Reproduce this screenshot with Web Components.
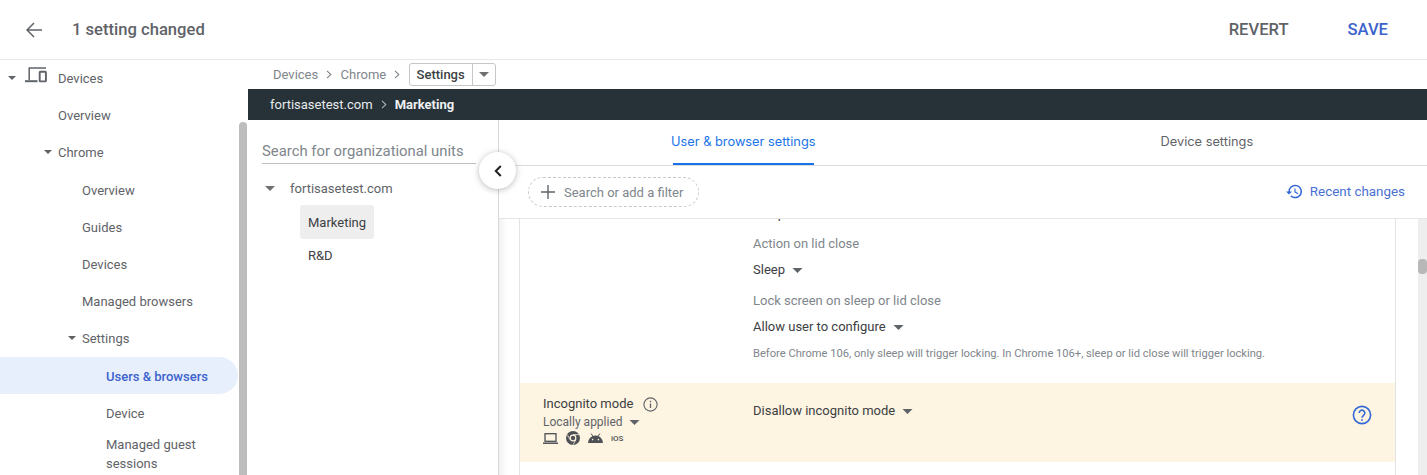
<!DOCTYPE html>
<html>
<head>
<meta charset="utf-8">
<title>Settings</title>
<style>
  html, body { margin: 0; height: 475px; overflow: hidden; background: #fff; }
  body { font-family: Roboto, "Liberation Sans", sans-serif; color: #3c4043; }
  admin-page { height: 475px; }
</style>
</head>
<body>
<admin-page></admin-page>
<script>
const ICONS = {
  caret: `<svg width="10" height="5" viewBox="0 0 10 5"><path d="M0 0h10L5 5z" fill="currentColor"/></svg>`,
  devices: `<svg width="22" height="16" viewBox="0 0 22 16" fill="none" stroke="currentColor" stroke-width="1.5"><path d="M21 1H4.2v12"/><path d="M0 14.2h12.5" stroke-width="2"/><rect x="14.7" y="4.8" width="6.2" height="9.6" rx=".6" stroke-width="1.9"/></svg>`,
  back: `<svg width="16" height="16" viewBox="0 0 16 16" fill="none" stroke="currentColor" stroke-width="1.5"><path d="M16 8H1.5M8 1 1 8l7 7"/></svg>`,
  crumb: `<svg width="6" height="9" viewBox="0 0 6 9" fill="none" stroke="currentColor" stroke-width="1.1"><path d="M1 .8 4.8 4.5 1 8.2"/></svg>`,
  plus: `<svg width="14" height="14" viewBox="0 0 14 14" fill="none" stroke="currentColor" stroke-width="1.4"><path d="M7 0v14M0 7h14"/></svg>`,
  history: `<svg width="16" height="15" viewBox="1 2.5 21 19" fill="currentColor"><path d="M13 3a9 9 0 0 0-9 9H1l3.9 3.9L9 12H6a7 7 0 1 1 2.05 4.95l-1.42 1.42A9 9 0 1 0 13 3zm-1 5v5l4.25 2.52.77-1.28-3.52-2.09V8z"/></svg>`,
  chevron: `<svg width="8" height="12" viewBox="0 0 8 12" fill="none" stroke="currentColor" stroke-width="2"><path d="M6.8 1 1.8 6l5 5"/></svg>`,
  info: `<svg width="15" height="15" viewBox="0 0 15 15" fill="none" stroke="currentColor"><circle cx="7.5" cy="7.5" r="6.6" stroke-width="1.1"/><path d="M7.5 6.5v4.4M7.5 3.7v1.5" stroke-width="1.3"/></svg>`,
  help: `<svg width="20" height="20" viewBox="0 0 20 20" fill="none" stroke="currentColor"><circle cx="10" cy="10" r="8.6" stroke-width="1.6"/><path d="M7.2 8a2.8 2.8 0 1 1 4.5 2.2c-1 .8-1.7 1.3-1.7 2.6" stroke-width="1.6"/><path d="M10 14.2v1.6" stroke-width="1.7"/></svg>`,
  laptop: `<svg width="15" height="11" viewBox="0 0 15 11" fill="none" stroke="currentColor"><rect x="2" y=".7" width="11" height="7.6" stroke-width="1.3"/><path d="M0 10.2h15" stroke-width="1.5"/></svg>`,
  chrome: `<svg width="14" height="14" viewBox="0 0 14 14"><circle cx="7" cy="7" r="7" fill="currentColor"/><circle cx="7" cy="7" r="3.4" fill="#fdf4e1"/><circle cx="7" cy="7" r="2.2" fill="currentColor"/><path d="M7 3.6h6M4.1 8.7 1.2 3.6M9.9 8.7 7 13.8" stroke="#fdf4e1" stroke-width=".8"/></svg>`,
  android: `<svg width="15" height="10" viewBox="0 0 15 10"><path d="M0 10a7.5 7.5 0 0 1 15 0z" fill="currentColor"/><path d="M3.2.6 5 3.6M11.8.6 10 3.6" stroke="currentColor"/><circle cx="4.6" cy="6.6" r=".8" fill="#fdf4e1"/><circle cx="10.4" cy="6.6" r=".8" fill="#fdf4e1"/></svg>`
};

class AppHeader extends HTMLElement {
  connectedCallback() {
    this.attachShadow({ mode: "open" }).innerHTML = `
    <style>
      :host { display: flex; align-items: center; height: 59px; border-bottom: 1px solid #e8e8e8; box-sizing: content-box; color: #5f6368; }
      .back { display: flex; margin-left: 26px; width: 46px; }
      .title { flex: 1; font-size: 16.6px; font-weight: 500; }
      .btn { font-size: 16.6px; font-weight: 500; }
      .save { color: #3c63cd; margin: 0 39px 0 59px; }
    </style>
    <span class="back">${ICONS.back}</span>
    <span class="title">1 setting changed</span>
    <span class="btn">REVERT</span>
    <span class="btn save">SAVE</span>`;
  }
}

class NavItem extends HTMLElement {
  connectedCallback() {
    const level = Number(this.getAttribute("level") || 0);
    const open = this.hasAttribute("open");
    const active = this.hasAttribute("active");
    const pad = [58, 82, 106][level];
    this.attachShadow({ mode: "open" }).innerHTML = `
    <style>
      :host { display: block; }
      .row { position: relative; display: flex; align-items: center; min-height: 37.2px; padding: 1px 0 0 ${pad}px; box-sizing: border-box; font-size: 13px; line-height: 19px; color: #5f6368; margin-right: 10px; }
      :host([wrapped]) .row { padding-top: 4px; }
      .row.active { background: #e8effc; color: #3c63cd; font-weight: 500; border-radius: 0 19px 19px 0; }
      .caret { position: absolute; left: ${pad - 14}px; top: 16.5px; display: flex; color: #5f6368; }
      .caret svg { width: 8px; height: 4px; }
      .icon { position: absolute; left: 25px; top: 8px; display: flex; color: #5f6368; }
    </style>
    <div class="row ${active ? "active" : ""}">
      ${open ? `<span class="caret" style="${this.hasAttribute("icon") ? "left:8px" : ""}">${ICONS.caret}</span>` : ""}
      ${this.hasAttribute("icon") ? `<span class="icon">${ICONS.devices}</span>` : ""}
      <slot></slot>
    </div>`;
  }
}

class SideNav extends HTMLElement {
  connectedCallback() {
    this.attachShadow({ mode: "open" }).innerHTML = `
    <style>
      :host { display: block; position: relative; width: 248px; flex: none; overflow: hidden; }
      .thumb { position: absolute; left: 239px; top: 62px; width: 8px; bottom: 0; background: #bdbdbd; border-radius: 4px 4px 0 0; }
      .list { width: 248px; margin-top: -.6px; }
    </style>
    <div class="list"><slot></slot></div>
    <div class="thumb"></div>`;
  }
}

class BreadCrumbs extends HTMLElement {
  connectedCallback() {
    this.attachShadow({ mode: "open" }).innerHTML = `
    <style>
      :host { display: flex; align-items: center; height: 29px; padding-left: 25px; font-size: 13px; color: #80868b; gap: 8.2px; }
      svg { display: block; }
      .i { display: flex; color: #80868b; }
      .pick { display: flex; width: 87px; height: 23px; border: 1px solid #c4c7c5; border-radius: 3px; box-sizing: border-box; color: #3c4043; font-weight: 500; align-items: center; }
      .label { padding: 0 7px; width: 63px; box-sizing: border-box; border-right: 1px solid #c4c7c5; line-height: 21px; font-size: 13px; }
      .c { flex: 1; display: flex; justify-content: center; color: #707070; }
    </style>
    <span>Devices</span><span class="i">${ICONS.crumb}</span>
    <span>Chrome</span><span class="i">${ICONS.crumb}</span>
    <span class="pick"><span class="label">Settings</span><span class="c">${ICONS.caret}</span></span>`;
  }
}

class OuBar extends HTMLElement {
  connectedCallback() {
    this.attachShadow({ mode: "open" }).innerHTML = `
    <style>
      :host { display: flex; align-items: center; gap: 8px; height: 31px; padding-left: 22px; background: #263238; color: #e8eaed; font-size: 13px; }
      b { font-weight: 700; color: #eef0f1; }
      span { display: flex; color: #a9b1b5; }
    </style>
    fortisasetest.com <span>${ICONS.crumb}</span> <b>Marketing</b>`;
  }
}

class OuPanel extends HTMLElement {
  connectedCallback() {
    this.attachShadow({ mode: "open" }).innerHTML = `
    <style>
      :host { display: block; width: 251px; flex: none; box-sizing: border-box; border-right: 1px solid #d9d9d9; font-size: 13px; padding: 20px 0 0 14px; }
      .search { width: 214px; line-height: 22px; box-sizing: border-box; border-bottom: 1px solid #bdbdbd; font-size: 14.85px; color: #80868b; white-space: nowrap; height: 24px; }
      .root { display: flex; align-items: center; margin-top: 14px; height: 20px; color: #5f6368; }
      .caret { display: flex; width: 28px; padding-left: 3px; box-sizing: border-box; color: #707070; }
      .node { display: inline-block; margin: 7px 0 0 38px; padding: 0 8px; height: 34px; line-height: 35px; color: #3c4043; border-radius: 3px; }
      .sel { background: #eeeeee; }
      .second { display: block; margin-top: 0; line-height: 34px; }
    </style>
    <div class="search">Search for organizational units</div>
    <div class="root"><span class="caret">${ICONS.caret}</span>fortisasetest.com</div>
    <span class="node sel">Marketing</span>
    <span class="node second">R&amp;D</span>`;
  }
}

class SettingsTabs extends HTMLElement {
  connectedCallback() {
    this.attachShadow({ mode: "open" }).innerHTML = `
    <style>
      :host { display: flex; gap: 345px; height: 46px; box-sizing: border-box; padding-left: 172px; border-bottom: 1px solid #dadce0; font-family: Inter, Roboto, sans-serif; font-size: 12.8px; color: #5f6368; }
      .tab { display: block; padding-top: 14px; height: 29px; white-space: nowrap; }
      .on { color: #1a73e8; position: relative; }
      .on::after { content: ""; position: absolute; left: 2px; right: 2px; top: 43px; height: 2px; background: #1a73e8; }
    </style>
    <div class="tab on">User &amp; browser settings</div>
    <div class="tab">Device settings</div>`;
  }
}

class FilterBar extends HTMLElement {
  connectedCallback() {
    this.attachShadow({ mode: "open" }).innerHTML = `
    <style>
      :host { display: flex; align-items: center; justify-content: space-between; height: 53px; box-sizing: border-box; border-bottom: 1px solid #e5e5e5; padding: 0 22px 0 29px; font-size: 13px; }
      .chip { display: flex; align-items: center; gap: 9px; width: 171px; height: 30px; box-sizing: border-box; padding-left: 12px; border: 1px dashed #c9c9c9; border-radius: 15px; color: #80868b; }
      .chip svg { color: #5f6368; }
      .recent { display: flex; align-items: center; gap: 8px; color: #4a6fd3; font-size: 13.4px; margin-top: -2px; }
      .recent svg { color: #3367d6; }
      svg { display: block; }
    </style>
    <div class="chip">${ICONS.plus}<span>Search or add a filter</span></div>
    <div class="recent">${ICONS.history}<span>Recent changes</span></div>`;
  }
}

class PickValue extends HTMLElement {
  connectedCallback() {
    this.attachShadow({ mode: "open" }).innerHTML = `
    <style>
      :host { display: flex; align-items: center; gap: 7px; color: #3c4043; font-size: 13px; line-height: 18px; }
      .c { display: flex; color: #5f6368; }
      svg { width: 11px; height: 5px; }
    </style>
    <slot></slot><span class="c">${ICONS.caret}</span>`;
  }
}

class PowerSettings extends HTMLElement {
  connectedCallback() {
    this.attachShadow({ mode: "open" }).innerHTML = `
    <style>
      :host { display: block; height: 164px; box-sizing: border-box; padding-left: 233px; overflow: hidden; }
      .cut { height: 4px; overflow: hidden; }
      .cut p { margin: -14px 0 0; font-size: 13px; line-height: 18px; color: #3c4043; }
      .label { font-size: 13px; line-height: 18px; color: #80868b; margin: 12px 0 8px; }
      .label.next { margin-top: 13px; }
      .note { font-size: 11.15px; line-height: 14px; color: #80868b; margin-top: 11px; white-space: nowrap; }
    </style>
    <div class="cut"><p>Sleep</p></div>
    <div class="label">Action on lid close</div>
    <pick-value>Sleep</pick-value>
    <div class="label next">Lock screen on sleep or lid close</div>
    <pick-value>Allow user to configure</pick-value>
    <div class="note">Before Chrome 106, only sleep will trigger locking. In Chrome 106+, sleep or lid close will trigger locking.</div>`;
  }
}

class IncognitoRow extends HTMLElement {
  connectedCallback() {
    this.attachShadow({ mode: "open" }).innerHTML = `
    <style>
      :host { display: grid; grid-template-columns: 210px 1fr 24px; height: 79px; box-sizing: border-box; padding: 12px 19px 0 23px; background: #fdf4e1; color: #5f6368; }
      .name { display: flex; align-items: center; gap: 10px; font-size: 13px; line-height: 18px; height: 18px; color: #3c4043; }
      .name span { display: flex; color: #5f6368; }
      .local { display: flex; align-items: center; gap: 6px; font-size: 12px; line-height: 18px; }
      .local svg { width: 11px; height: 5px; }
      .icons { display: flex; align-items: center; gap: 8px; height: 16px; margin-top: -1px; color: #4d5156; }
      .ios { font-size: 8px; font-weight: 500; }
      .value { padding-top: 7px; }
      .help { color: #3367d6; display: flex; padding-top: 10px; }
      svg { display: block; }
    </style>
    <div>
      <div class="name">Incognito mode <span>${ICONS.info}</span></div>
      <div class="local">Locally applied ${ICONS.caret}</div>
      <div class="icons">${ICONS.laptop}${ICONS.chrome}${ICONS.android}<span class="ios">iOS</span></div>
    </div>
    <div class="value"><pick-value>Disallow incognito mode</pick-value></div>
    <div class="help">${ICONS.help}</div>`;
  }
}

class SettingsPane extends HTMLElement {
  connectedCallback() {
    this.attachShadow({ mode: "open" }).innerHTML = `
    <style>
      :host { display: block; position: relative; flex: 1; min-width: 0; height: 355px; }
      .scroll { display: flex; height: 256px; overflow: hidden; position: relative; }
      .scroll::before { content: ""; position: absolute; left: 0; top: 0; bottom: 0; width: 8px; background: linear-gradient(90deg, #f1f1f1, #fff); }
      .card { width: 877px; margin-left: 20px; box-sizing: border-box; border-left: 1px solid #e3e3e3; border-right: 1px solid #e3e3e3; flex: none; }
      .track { position: absolute; right: 0; top: 0; bottom: 0; width: 9px; background: #eeeeee; }
      .bar { position: absolute; right: 0; top: 40px; width: 9px; height: 15px; border-radius: 4px; background: #b8b8b8; }
    </style>
    <settings-tabs></settings-tabs>
    <filter-bar></filter-bar>
    <div class="scroll">
      <div class="card">
        <power-settings></power-settings>
        <incognito-row></incognito-row>
      </div>
      <div class="track"><div class="bar"></div></div>
    </div>`;
  }
}

class CollapseButton extends HTMLElement {
  connectedCallback() {
    this.attachShadow({ mode: "open" }).innerHTML = `
    <style>
      :host { position: absolute; left: 231px; top: 32px; width: 37px; height: 37px; border-radius: 50%; background: #fff; box-shadow: 0 1px 6px rgba(0,0,0,.28); display: flex; align-items: center; justify-content: center; color: #202124; }
      svg { display: block; }
    </style>
    ${ICONS.chevron}`;
  }
}

class AdminPage extends HTMLElement {
  connectedCallback() {
    this.attachShadow({ mode: "open" }).innerHTML = `
    <style>
      :host { display: block; overflow: hidden; }
      .body { display: flex; height: 415px; }
      .main { flex: 1; min-width: 0; display: flex; flex-direction: column; }
      .panels { position: relative; display: flex; flex: 1; min-height: 0; }
    </style>
    <app-header></app-header>
    <div class="body">
      <side-nav>
        <nav-item icon open>Devices</nav-item>
        <nav-item>Overview</nav-item>
        <nav-item open>Chrome</nav-item>
        <nav-item level="1">Overview</nav-item>
        <nav-item level="1">Guides</nav-item>
        <nav-item level="1">Devices</nav-item>
        <nav-item level="1">Managed browsers</nav-item>
        <nav-item level="1" open>Settings</nav-item>
        <nav-item level="2" active>Users &amp; browsers</nav-item>
        <nav-item level="2">Device</nav-item>
        <nav-item level="2" wrapped>Managed guest sessions</nav-item>
      </side-nav>
      <div class="main">
        <bread-crumbs></bread-crumbs>
        <ou-bar></ou-bar>
        <div class="panels">
          <ou-panel></ou-panel>
          <settings-pane></settings-pane>
          <collapse-button></collapse-button>
        </div>
      </div>
    </div>`;
  }
}

customElements.define("pick-value", PickValue);
customElements.define("app-header", AppHeader);
customElements.define("nav-item", NavItem);
customElements.define("side-nav", SideNav);
customElements.define("bread-crumbs", BreadCrumbs);
customElements.define("ou-bar", OuBar);
customElements.define("ou-panel", OuPanel);
customElements.define("settings-tabs", SettingsTabs);
customElements.define("filter-bar", FilterBar);
customElements.define("power-settings", PowerSettings);
customElements.define("incognito-row", IncognitoRow);
customElements.define("settings-pane", SettingsPane);
customElements.define("collapse-button", CollapseButton);
customElements.define("admin-page", AdminPage);
</script>
</body>
</html>
